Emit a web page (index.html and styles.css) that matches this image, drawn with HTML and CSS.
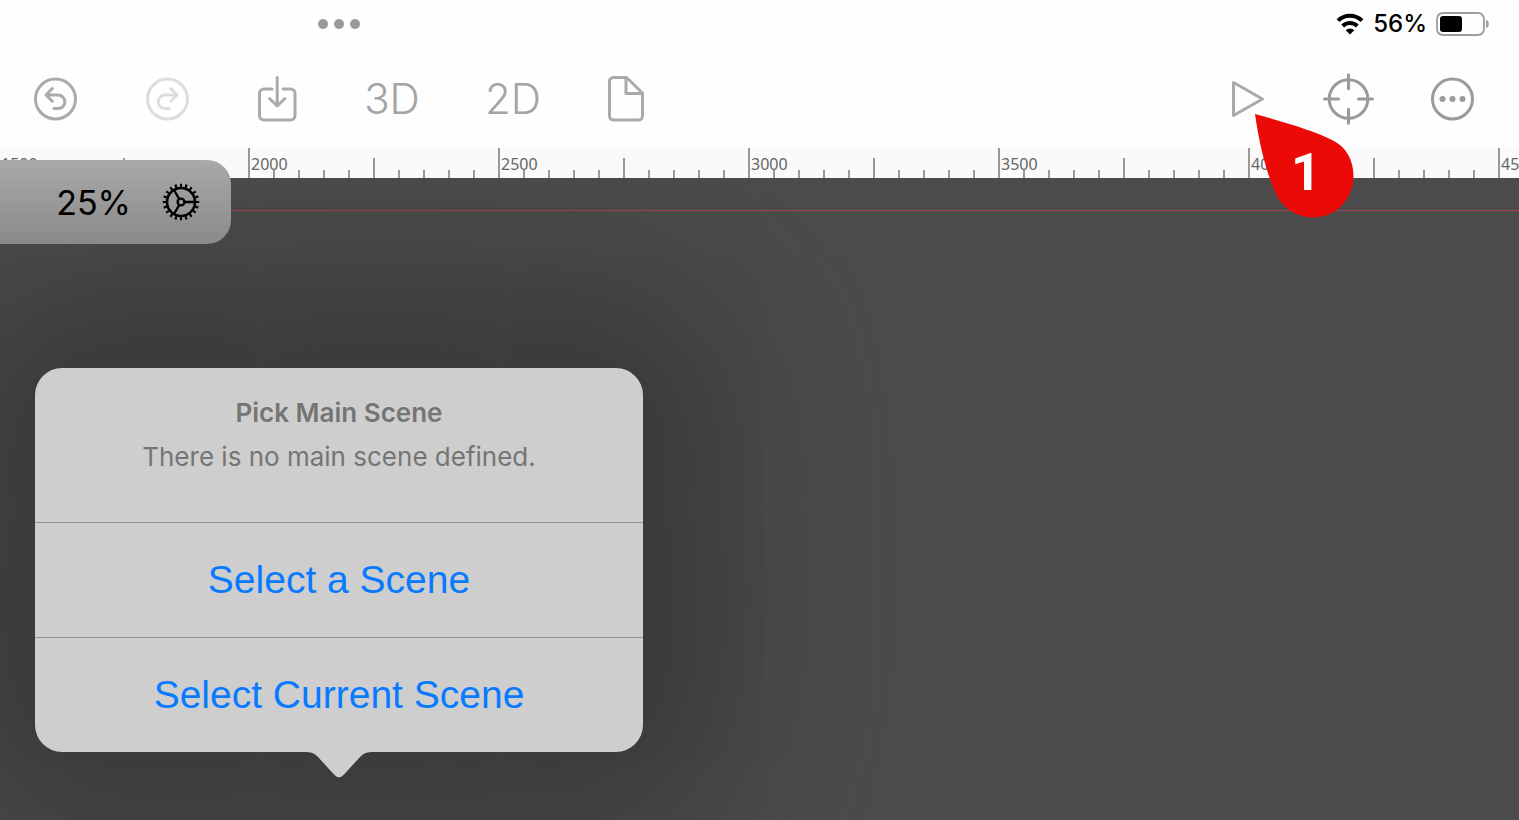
FILE: index.html
```html
<!DOCTYPE html>
<html lang="en">
<head>
    <meta charset="UTF-8">
    <meta name="viewport" content="width=device-width, initial-scale=1.0">
    <title>Scene Editor</title>
    <link rel="stylesheet" href="styles.css">
</head>
<body>
    <header class="statusbar">
        <button class="dots" aria-label="Multitasking"><span></span><span></span><span></span></button>
        <div class="status">
            <svg width="28" height="22" viewBox="0 0 28 22" fill="none" stroke="#000" stroke-width="4">
                <path d="M2 7.700a17 17 0 0 1 24 0"/>
                <path d="M6.700 13a10.400 10.400 0 0 1 14.600 0"/>
                <path d="M14 21.500l-4.300-4.200a6 6 0 0 1 8.600 0z" fill="#000" stroke="none"/>
            </svg>
            <span class="percent">56%</span>
            <svg width="54" height="26" viewBox="0 0 54 26">
                <rect x="1" y="2" width="47" height="22" rx="6" fill="none" stroke="#9c9c9c" stroke-width="1.800"/>
                <rect x="4" y="5" width="22" height="16" rx="3" fill="#000"/>
                <path d="M50 9c3.800 1 3.800 7 0 8z" fill="#9c9c9c"/>
            </svg>
        </div>
    </header>

    <nav class="toolbar">
        <div class="tools tools-left">
            <button aria-label="Undo">
                <svg width="43" height="44" viewBox="0 0 43 44">
                    <circle cx="21.500" cy="22" r="20"/>
                    <path d="M18.300 11.500l-6.300 6.500 6.300 6.200M12.500 18H24a6.800 6.800 0 0 1 0 13.600h-4"/>
                </svg>
            </button>
            <button class="off" aria-label="Redo" disabled>
                <svg width="43" height="44" viewBox="0 0 43 44">
                    <circle cx="21.500" cy="22" r="20"/>
                    <path d="M24.700 11.500l6.300 6.500-6.300 6.200M30.500 18H19a6.800 6.800 0 0 0 0 13.600h4"/>
                </svg>
            </button>
            <button aria-label="Import">
                <svg width="39" height="46" viewBox="0 0 39 46">
                    <path d="M14 13H6a4.500 4.500 0 0 0-4.500 4.500v22a4.500 4.500 0 0 0 4.500 4.500h26.500a4.500 4.500 0 0 0 4.500-4.500V17.500a4.500 4.500 0 0 0-4.500-4.500h-7.500"/>
                    <path d="M19.200 1.500v28M11.500 22.500l7.700 7.500 7.700-7.500"/>
                </svg>
            </button>
            <button class="mode">3D</button>
            <button class="mode">2D</button>
            <button aria-label="New document">
                <svg width="36" height="46" viewBox="0 0 36 46">
                    <path d="M5.500 1.500h13L34.500 17v23a4 4 0 0 1-4 4h-25a4 4 0 0 1-4-4V5.500a4 4 0 0 1 4-4z"/>
                    <path d="M18 2V17.500h16"/>
                </svg>
            </button>
        </div>
        <div class="tools tools-right">
            <button aria-label="Play">
                <svg width="36" height="38" viewBox="0 0 36 38">
                    <path d="M2.500 2.500L31.500 19 2.500 35.500z" stroke="#aaa"/>
                </svg>
            </button>
            <button aria-label="Center view">
                <svg width="52" height="52" viewBox="0 0 52 52">
                    <circle cx="25.500" cy="26" r="19.300"/>
                    <path d="M25.500 1.800v14M25.500 36.200v14M1.500 26h14M35.500 26h14"/>
                </svg>
            </button>
            <button aria-label="More">
                <svg width="44" height="44" viewBox="0 0 44 44">
                    <circle cx="21.500" cy="22" r="20"/>
                    <g fill="#9a9a9a" stroke="none">
                        <circle cx="11.500" cy="22" r="3"/>
                        <circle cx="21.500" cy="22" r="3"/>
                        <circle cx="31.500" cy="22" r="3"/>
                    </g>
                </svg>
            </button>
        </div>
    </nav>

    <div class="workspace">
        <div class="ruler">
            <span>1500</span>
            <span>2000</span>
            <span>2500</span>
            <span>3000</span>
            <span>3500</span>
            <span>4000</span>
            <span>4500</span>
        </div>

        <main class="canvas">
            <div class="guide"></div>
            <section class="popover" role="dialog" aria-labelledby="pick-title">
                <div class="popover-head">
                    <h1 id="pick-title">Pick Main Scene</h1>
                    <p>There is no main scene defined.</p>
                </div>
                <button>Select a Scene</button>
                <button>Select Current Scene</button>
                <svg class="tail" width="72" height="26" viewBox="0 0 72 26">
                    <path d="M0 0C9 0 11 1 15 5L31 22.500Q36 28 41 22.500L57 5C61 1 63 0 72 0z" fill="#cecece"/>
                </svg>
            </section>
        </main>

        <div class="zoombar">
            <span>25%</span>
            <button aria-label="Settings">
                <svg width="38" height="38" viewBox="0 0 38 38" fill="none" stroke="#000">
                    <circle cx="19" cy="19" r="14" stroke-width="2.600"/>
                    <!-- 20 teeth -->
                    <circle cx="19" cy="19" r="16.500" stroke-width="3.400" pathLength="100" stroke-dasharray="2 3" stroke-dashoffset="1"/>
                    <circle cx="19" cy="19" r="3.400" stroke-width="2.400"/>
                    <path d="M22.500 19H33M17.200 16L12 7M17.200 22L12 31" stroke-width="2.400"/>
                </svg>
            </button>
        </div>
    </div>

    <!-- step marker pointing at the play button -->
    <div class="marker">
        <svg width="100" height="104" viewBox="0 0 100 104">
            <path d="M0 0C25 7 58 16 79 27C92 34 98.500 47 98.500 62C98.500 86 80 103.500 58 103.500C42 103.500 27 94 20 78C10 54 4 28 0 0z" fill="#eb0a06"/>
        </svg>
        <span>1</span>
    </div>
</body>
</html>
```
FILE: styles.css
```css
* {
    box-sizing: border-box;
}

body {
    margin: 0;
    min-height: 100vh;
    display: flex;
    flex-direction: column;
    position: relative;
    overflow: hidden;
    background: #fefefe;
    color: #000;
    font-family: Inter, "Liberation Sans", sans-serif;
}

button {
    margin: 0;
    padding: 0;
    border: none;
    background: none;
    color: inherit;
    font: inherit;
    cursor: pointer;
}

svg {
    display: block;
}

/* status bar */
.statusbar {
    height: 48px;
    padding: 0 29px 0 318px;
    display: flex;
    align-items: center;
    justify-content: space-between;
}

.dots {
    display: flex;
    gap: 6px;
}

.dots span {
    width: 10px;
    height: 10px;
    border-radius: 50%;
    background: #999;
}

.status {
    display: flex;
    align-items: center;
    gap: 9px;
}

.percent {
    font-size: 24px;
    font-weight: 500;
    line-height: 28px;
}

/* toolbar */
.toolbar {
    height: 100px;
    padding: 1px 44px 0 34px;
    display: flex;
    align-items: center;
    justify-content: space-between;
}

.tools {
    display: flex;
    align-items: center;
}

.tools-left {
    gap: 69px;
}

.tools-right {
    gap: 56px;
}

.tools svg {
    fill: none;
    stroke: #aaa;
    stroke-width: 3;
    stroke-linecap: round;
    stroke-linejoin: round;
}

.tools-right svg {
    stroke: #9a9a9a;
}

.tools .off svg {
    stroke: #ddd;
}

.mode {
    width: 52px;
    display: flex;
    justify-content: center;
    color: #a4a4a4;
    font-size: 42px;
    font-weight: 300;
    line-height: 48px;
}

/* ruler */
.workspace {
    flex: 1;
    display: flex;
    flex-direction: column;
    position: relative;
}

.ruler {
    height: 30px;
    display: flex;
    overflow: hidden;
    background: #fafafa;
    color: #666;
}

.ruler span {
    flex: 0 0 250px;
    padding-left: 1px;
    border-left: 2px solid #999;
    background:
        linear-gradient(#999, #999) 123px 100% / 2px 20px no-repeat,
        repeating-linear-gradient(90deg, transparent 0 23px, #999 23px 25px) 0 100% / 100% 8px no-repeat;
    font-family: "Noto Sans", sans-serif;
    font-size: 16px;
    line-height: 32px;
}

.ruler span:first-child {
    margin-left: -2px;
}

/* canvas */
.canvas {
    flex: 1;
    position: relative;
    overflow: hidden;
    padding: 32px 35px 43px;
    background: #4c4c4c;
}

.guide {
    height: 1px;
    margin: 0 -35px 157px;
    background: #a8424c;
}

.popover {
    position: relative;
    width: 608px;
    max-width: 100%;
    border-radius: 27px;
    background: #cecece;
    box-shadow: 0 0 180px 80px rgba(42, 46, 42, 0.65);
    text-align: center;
}

.popover-head {
    height: 154px;
    padding: 28px 24px;
    color: #757575;
    font-size: 26px;
    line-height: 34px;
}

.popover h1 {
    margin: 0 0 10px;
    font-size: 26px;
    font-weight: 600;
}

.popover p {
    margin: 0;
}

.popover button {
    display: block;
    width: 100%;
    height: 115px;
    border-top: 1px solid #959695;
    color: #077aff;
    font-family: "Liberation Sans", Arial, sans-serif;
    font-size: 39px;
}

.tail {
    position: absolute;
    top: 100%;
    left: 50%;
    margin-left: -36px;
}

/* zoom panel */
.zoombar {
    position: absolute;
    top: 12px;
    left: 0;
    width: 231px;
    height: 84px;
    padding-right: 31px;
    display: flex;
    align-items: center;
    justify-content: flex-end;
    gap: 31px;
    border-radius: 0 24px 24px 0;
    background: linear-gradient(#a9a9a9, #8a8a8a);
    font-size: 34px;
}

/* step marker */
.marker {
    position: absolute;
    top: 114px;
    right: 164px;
    width: 100px;
    height: 104px;
}

.marker span {
    position: absolute;
    top: 29px;
    left: 36px;
    color: #fff;
    font-family: Roboto, "Liberation Sans", sans-serif;
    font-size: 52px;
    font-weight: bold;
    line-height: 60px;
}
```
